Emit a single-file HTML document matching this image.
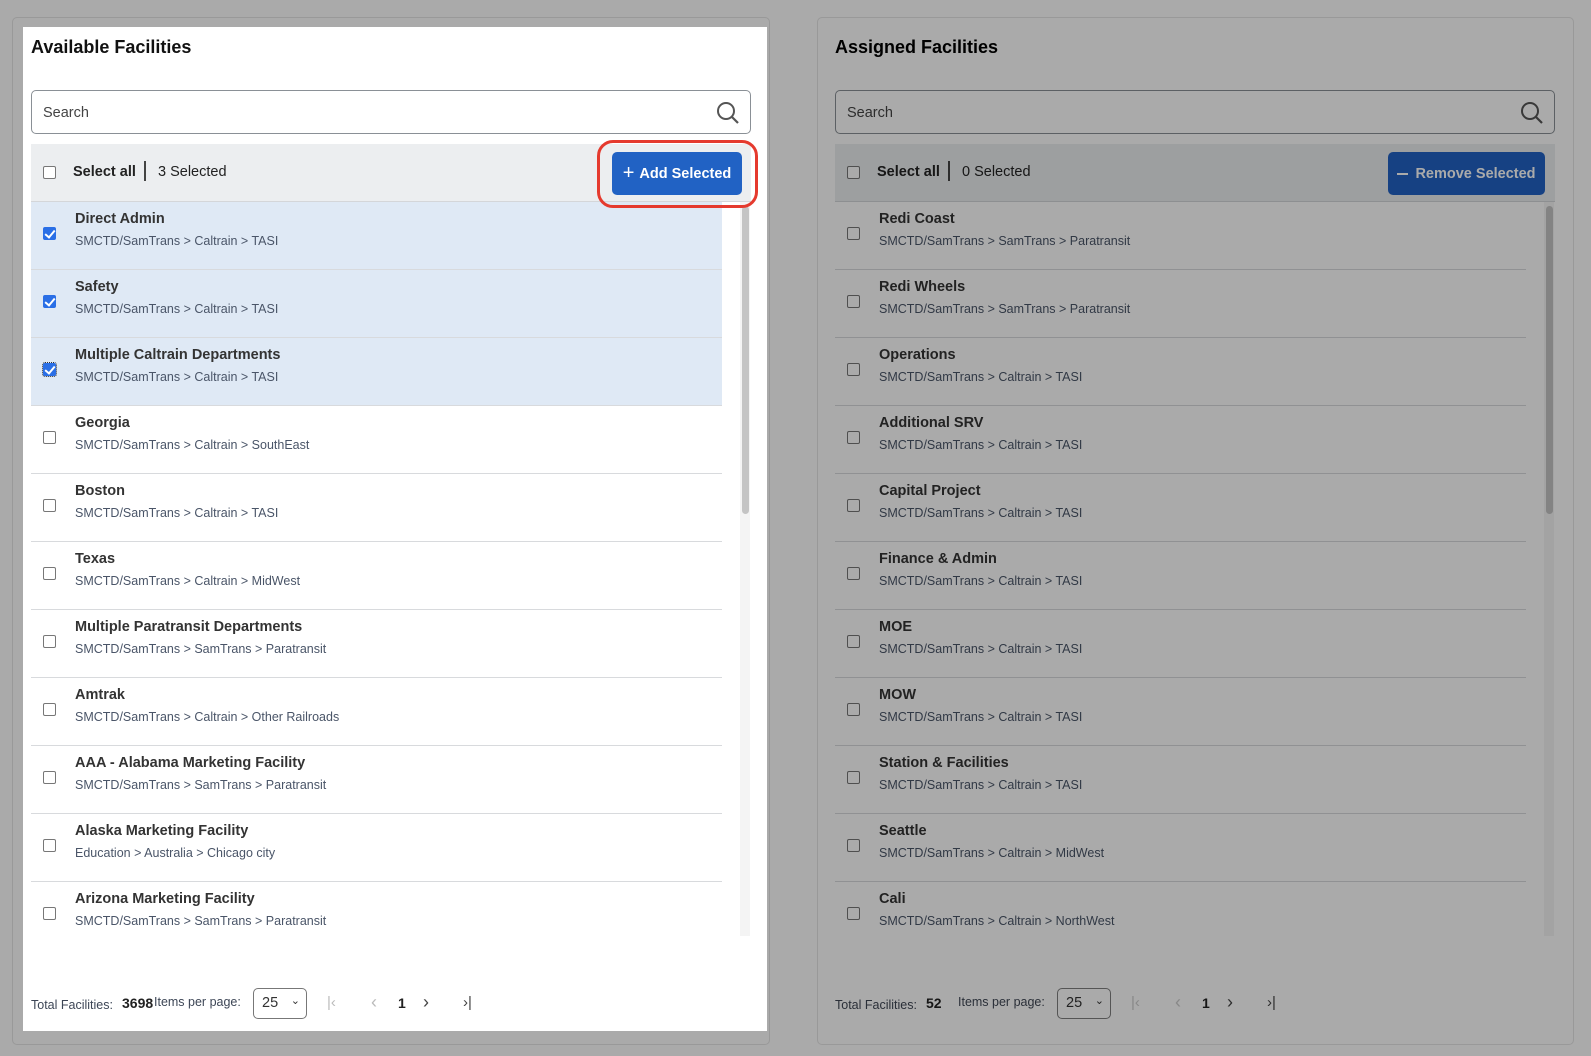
<!DOCTYPE html>
<html><head><meta charset="utf-8"><style>
*{box-sizing:border-box;margin:0;padding:0}
body{width:1591px;height:1056px;background:#aaaaaa;font-family:"Liberation Sans",Arial,sans-serif;position:relative;overflow:hidden}
.outer{position:absolute;border:1px solid #999;border-radius:5px}
.card{position:absolute;background:#fff}
.a{position:absolute}
.title{font-size:18px;font-weight:bold;color:#111}
.search{border:1px solid #8a9096;border-radius:5px;height:44px;width:720px;background:#fff}
.search span{position:absolute;left:11px;top:14px;font-size:14.5px;color:#444}
.search svg{position:absolute;right:9px;top:9px}
.hdr{height:58px;width:720px;background:#eceef0;border-bottom:1px solid #d4d6d9}
.cb{position:absolute;width:13px;height:13px;border:1px solid #777;border-radius:2px;background:#fff}
.cb.on{background:#2a6fe6;border-color:#2a6fe6}
.cb.on:after{content:"";position:absolute;left:3px;top:0px;width:4px;height:8px;border:solid #fff;border-width:0 2px 2px 0;transform:rotate(40deg)}
.hl{font-size:14.5px;color:#222}
.btn{position:absolute;background:#2162c4;color:#fff;border-radius:5px;font-size:14.5px;font-weight:bold;display:flex;align-items:center;justify-content:center}
.list{position:absolute;top:202px;left:0;width:720px;height:734px;overflow:hidden}
.row{position:absolute;left:0;width:691px;height:68px;border-bottom:1px solid #d8dadd}
.row.sel{background:#dfe9f5}
.row .cb{left:12px;top:25px}
.row .t{position:absolute;left:44px;top:9px;font-size:14.5px;font-weight:bold;color:#333}
.row .s{position:absolute;left:44px;top:32px;font-size:12.5px;color:#4a5568}
.track{position:absolute;left:709px;top:0;width:10px;height:734px;background:#f4f4f4}
.thumb{position:absolute;left:2px;top:4px;width:7px;height:308px;background:#c4c4c4;border-radius:4px}
.foot{position:absolute;top:988px;left:0;font-size:12.5px;color:#3d4656}
.sel25{position:absolute;width:54px;height:31px;border:1px solid #777;border-radius:5px;background:#fff;font-size:14.5px;color:#333;padding:6px 0 0 8px}
</style></head><body>

<!-- LEFT -->
<div class="outer" style="left:12px;top:17px;width:758px;height:1028px"></div>
<div class="card" style="left:23px;top:27px;width:744px;height:1004px"></div>
<div class="a" style="left:31px;top:0;width:730px;height:1056px">
  <div class="a title" style="left:0;top:37px">Available Facilities</div>
  <div class="a search" style="left:0;top:90px"><span>Search</span>
    <svg width="26" height="26" viewBox="0 0 26 26"><circle cx="11" cy="11" r="8" fill="none" stroke="#555" stroke-width="2"/><line x1="17" y1="17" x2="23" y2="23" stroke="#555" stroke-width="2.2"/></svg></div>
  <div class="a hdr" style="left:0;top:144px">
    <div class="cb" style="left:12px;top:22px"></div>
    <div class="a hl" style="left:42px;top:20px;font-weight:bold">Select all</div>
    <div class="a" style="left:113px;top:17px;width:2px;height:20px;background:#444"></div>
    <div class="a hl" style="left:127px;top:20px">3 Selected</div>
  </div>
  <div class="list">
    <div class="row sel" style="top:0"><div class="cb on"></div><div class="t">Direct Admin</div><div class="s">SMCTD/SamTrans &gt; Caltrain &gt; TASI</div></div>
    <div class="row sel" style="top:68px"><div class="cb on"></div><div class="t">Safety</div><div class="s">SMCTD/SamTrans &gt; Caltrain &gt; TASI</div></div>
    <div class="row sel" style="top:136px"><div class="cb on" style="outline:1px dotted #333"></div><div class="t">Multiple Caltrain Departments</div><div class="s">SMCTD/SamTrans &gt; Caltrain &gt; TASI</div></div>
    <div class="row" style="top:204px"><div class="cb"></div><div class="t">Georgia</div><div class="s">SMCTD/SamTrans &gt; Caltrain &gt; SouthEast</div></div>
    <div class="row" style="top:272px"><div class="cb"></div><div class="t">Boston</div><div class="s">SMCTD/SamTrans &gt; Caltrain &gt; TASI</div></div>
    <div class="row" style="top:340px"><div class="cb"></div><div class="t">Texas</div><div class="s">SMCTD/SamTrans &gt; Caltrain &gt; MidWest</div></div>
    <div class="row" style="top:408px"><div class="cb"></div><div class="t">Multiple Paratransit Departments</div><div class="s">SMCTD/SamTrans &gt; SamTrans &gt; Paratransit</div></div>
    <div class="row" style="top:476px"><div class="cb"></div><div class="t">Amtrak</div><div class="s">SMCTD/SamTrans &gt; Caltrain &gt; Other Railroads</div></div>
    <div class="row" style="top:544px"><div class="cb"></div><div class="t">AAA - Alabama Marketing Facility</div><div class="s">SMCTD/SamTrans &gt; SamTrans &gt; Paratransit</div></div>
    <div class="row" style="top:612px"><div class="cb"></div><div class="t">Alaska Marketing Facility</div><div class="s">Education &gt; Australia &gt; Chicago city</div></div>
    <div class="row" style="top:680px"><div class="cb"></div><div class="t">Arizona Marketing Facility</div><div class="s">SMCTD/SamTrans &gt; SamTrans &gt; Paratransit</div></div>
    <div class="track"><div class="thumb"></div></div>
  </div>
  <div class="a" style="left:566px;top:140px;width:161px;height:68px;border:3px solid #e53a2e;border-radius:16px"></div>
  <div class="btn" style="left:581px;top:152px;width:130px;height:43px"><span style="font-size:20px;font-weight:normal;margin-right:5px">+</span>Add Selected</div>
  <div class="foot" style="left:0;top:998px">Total Facilities:</div>
  <div class="foot" style="left:91px;top:995px;font-size:14px;font-weight:bold;color:#222">3698</div>
  <div class="foot" style="left:123px;top:995px">Items per page:</div>
  <div class="sel25" style="left:222px;top:988px">25<span style="position:absolute;right:6px;top:5px;font-size:11px">&#8964;</span></div>
  <div class="foot" style="left:296px;top:994px;color:#bbb;font-size:15px">|&lsaquo;</div>
  <div class="foot" style="left:340px;top:992px;color:#bbb;font-size:18px">&lsaquo;</div>
  <div class="foot" style="left:367px;top:995px;font-size:14px;font-weight:bold;color:#222">1</div>
  <div class="foot" style="left:392px;top:992px;color:#444;font-size:18px">&rsaquo;</div>
  <div class="foot" style="left:432px;top:994px;color:#444;font-size:15px">&rsaquo;|</div>
</div>

<!-- RIGHT (dimmed) -->
<div class="a" style="left:817px;top:17px;width:757px;height:1028px;border:1px solid #999;border-radius:5px"></div>
<div class="a" style="left:835px;top:0;width:730px;height:1056px;filter:brightness(0.667)">
  <div class="a title" style="left:0;top:37px;color:#000">Assigned Facilities</div>
  <div class="a search" style="left:0;top:90px"><span>Search</span>
    <svg width="26" height="26" viewBox="0 0 26 26"><circle cx="11" cy="11" r="8" fill="none" stroke="#555" stroke-width="2"/><line x1="17" y1="17" x2="23" y2="23" stroke="#555" stroke-width="2.2"/></svg></div>
  <div class="a hdr" style="left:0;top:144px">
    <div class="cb" style="left:12px;top:22px"></div>
    <div class="a hl" style="left:42px;top:20px;font-weight:bold">Select all</div>
    <div class="a" style="left:113px;top:17px;width:2px;height:20px;background:#444"></div>
    <div class="a hl" style="left:127px;top:20px">0 Selected</div>
  </div>
  <div class="btn" style="left:553px;top:152px;width:157px;height:43px"><span style="display:inline-block;width:11px;height:2px;background:#fff;margin-right:7px"></span>Remove Selected</div>
  <div class="list" style="background:#fff">
    <div class="row" style="top:0"><div class="cb"></div><div class="t">Redi Coast</div><div class="s">SMCTD/SamTrans &gt; SamTrans &gt; Paratransit</div></div>
    <div class="row" style="top:68px"><div class="cb"></div><div class="t">Redi Wheels</div><div class="s">SMCTD/SamTrans &gt; SamTrans &gt; Paratransit</div></div>
    <div class="row" style="top:136px"><div class="cb"></div><div class="t">Operations</div><div class="s">SMCTD/SamTrans &gt; Caltrain &gt; TASI</div></div>
    <div class="row" style="top:204px"><div class="cb"></div><div class="t">Additional SRV</div><div class="s">SMCTD/SamTrans &gt; Caltrain &gt; TASI</div></div>
    <div class="row" style="top:272px"><div class="cb"></div><div class="t">Capital Project</div><div class="s">SMCTD/SamTrans &gt; Caltrain &gt; TASI</div></div>
    <div class="row" style="top:340px"><div class="cb"></div><div class="t">Finance &amp; Admin</div><div class="s">SMCTD/SamTrans &gt; Caltrain &gt; TASI</div></div>
    <div class="row" style="top:408px"><div class="cb"></div><div class="t">MOE</div><div class="s">SMCTD/SamTrans &gt; Caltrain &gt; TASI</div></div>
    <div class="row" style="top:476px"><div class="cb"></div><div class="t">MOW</div><div class="s">SMCTD/SamTrans &gt; Caltrain &gt; TASI</div></div>
    <div class="row" style="top:544px"><div class="cb"></div><div class="t">Station &amp; Facilities</div><div class="s">SMCTD/SamTrans &gt; Caltrain &gt; TASI</div></div>
    <div class="row" style="top:612px"><div class="cb"></div><div class="t">Seattle</div><div class="s">SMCTD/SamTrans &gt; Caltrain &gt; MidWest</div></div>
    <div class="row" style="top:680px"><div class="cb"></div><div class="t">Cali</div><div class="s">SMCTD/SamTrans &gt; Caltrain &gt; NorthWest</div></div>
    <div class="track"><div class="thumb"></div></div>
  </div>
</div>
<div class="a" style="left:835px;top:0;width:730px;height:1056px">
  <div class="foot" style="left:0;top:998px;color:#2a2f38">Total Facilities:</div>
  <div class="foot" style="left:91px;top:995px;font-size:14px;font-weight:bold;color:#161616">52</div>
  <div class="foot" style="left:123px;top:995px;color:#2a2f38">Items per page:</div>
  <div class="sel25" style="left:222px;top:988px;background:#aaa;border-color:#555;color:#222">25<span style="position:absolute;right:6px;top:5px;font-size:11px">&#8964;</span></div>
  <div class="foot" style="left:296px;top:994px;color:#888;font-size:15px">|&lsaquo;</div>
  <div class="foot" style="left:340px;top:992px;color:#888;font-size:18px">&lsaquo;</div>
  <div class="foot" style="left:367px;top:995px;font-size:14px;font-weight:bold;color:#161616">1</div>
  <div class="foot" style="left:392px;top:992px;color:#2d2d2d;font-size:18px">&rsaquo;</div>
  <div class="foot" style="left:432px;top:994px;color:#2d2d2d;font-size:15px">&rsaquo;|</div>
</div>
</body></html>
